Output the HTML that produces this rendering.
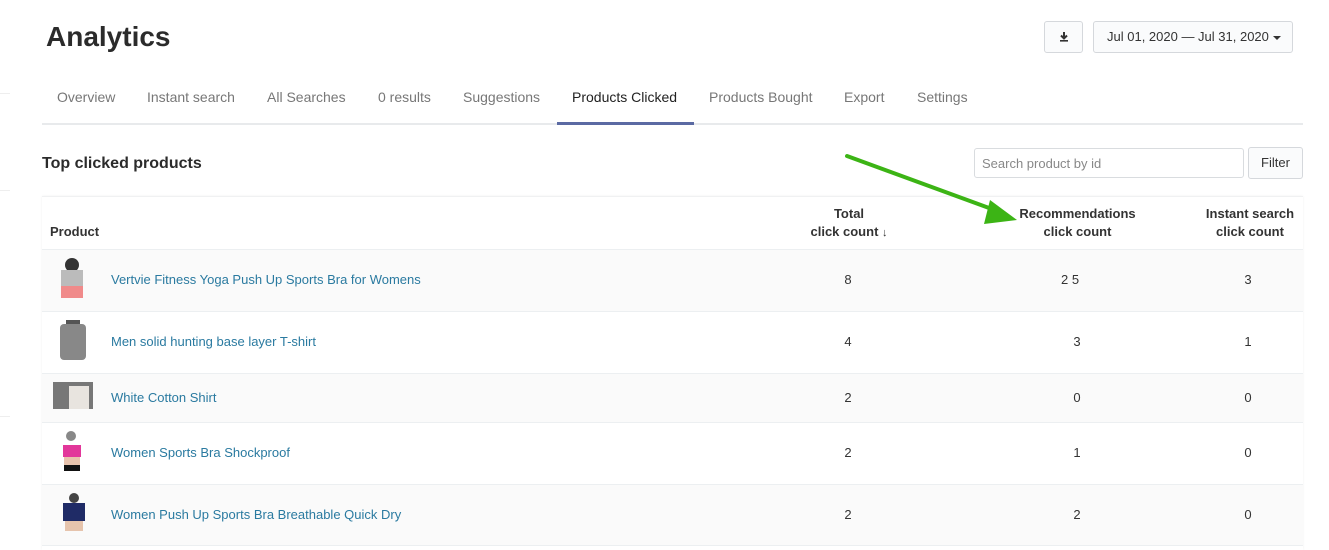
<!DOCTYPE html>
<html><head><meta charset="utf-8"><style>
*{box-sizing:border-box;margin:0;padding:0}
body{width:1329px;height:550px;background:#fff;font-family:"Liberation Sans",sans-serif;position:relative;overflow:hidden;color:#333}
.a{position:absolute}
h1{position:absolute;left:46px;top:21px;font-size:28px;font-weight:bold;color:#2b2b2b}
.btn{position:absolute;border:1px solid #d5d8dc;border-radius:3px;background:#fafbfc;font-size:13px;color:#333}
.tab{position:absolute;top:89px;font-size:14px;color:#777}
.row{position:absolute;left:42px;width:1261px;border-top:1px solid #eceff1}
.lnk{position:absolute;left:111px;font-size:13px;color:#2a7aa0}
.n{position:absolute;font-size:13px;color:#333;width:20px;text-align:center}
.th{position:absolute;font-size:13px;font-weight:bold;color:#333;text-align:center;line-height:18px}
</style></head><body>
<div class="a" style="left:0;top:93px;width:10px;height:1px;background:#eee"></div>
<div class="a" style="left:0;top:190px;width:10px;height:1px;background:#eee"></div>
<div class="a" style="left:0;top:416px;width:10px;height:1px;background:#eee"></div>
<h1>Analytics</h1>
<div class="btn" style="left:1044px;top:21px;width:39px;height:32px;text-align:center;line-height:30px;font-size:12px">
<svg width="10" height="11" viewBox="0 0 10 11" style="margin-top:9px"><path d="M5 1v6M2 4.5L5 7.5 8 4.5" stroke="#333" stroke-width="2" fill="none"/><rect x="1" y="9" width="8" height="1.6" fill="#333"/></svg></div>
<div class="btn" style="left:1093px;top:21px;width:200px;height:32px;line-height:30px;padding-left:13px">Jul 01, 2020 — Jul 31, 2020 <span style="display:inline-block;border-left:4px solid transparent;border-right:4px solid transparent;border-top:4px solid #333;vertical-align:middle"></span></div>
<div class="tab" style="left:57px">Overview</div>
<div class="tab" style="left:147px">Instant search</div>
<div class="tab" style="left:267px">All Searches</div>
<div class="tab" style="left:378px">0 results</div>
<div class="tab" style="left:463px">Suggestions</div>
<div class="tab" style="left:572px;color:#222">Products Clicked</div>
<div class="tab" style="left:709px">Products Bought</div>
<div class="tab" style="left:844px">Export</div>
<div class="tab" style="left:917px">Settings</div>
<div class="a" style="left:42px;top:123px;width:1261px;height:2px;background:#e8eaec"></div>
<div class="a" style="left:557px;top:122px;width:137px;height:3px;background:#5b6aa3"></div>
<div class="a" style="left:42px;top:155px;font-size:16px;font-weight:bold;color:#2b2b2b">Top clicked products</div>
<div class="a" style="left:974px;top:148px;width:270px;height:30px;border:1px solid #d9dcdf;border-radius:3px;font-size:13px;color:#888;padding:7px 0 0 7px">Search product by id</div>
<div class="btn" style="left:1248px;top:147px;width:55px;height:32px;text-align:center;line-height:30px">Filter</div>
<div class="a" style="left:42px;top:196px;width:1261px;height:354px;border-top:1px solid #f0f1f2;box-shadow:0 0 2px rgba(0,0,0,.06)"></div>
<div class="th" style="left:50px;top:223px;text-align:left">Product</div>
<div class="th" style="left:789px;top:205px;width:120px">Total<br>click count <span style="font-weight:normal;font-size:11px">↓</span></div>
<div class="th" style="left:1010px;top:205px;width:135px">Recommendations<br>click count</div>
<div class="th" style="left:1195px;top:205px;width:110px">Instant search<br>click count</div>
<div class="row" style="top:249px;height:62px;background:#fafafa"></div>
<div class="row" style="top:311px;height:62px;background:#fff"></div>
<div class="row" style="top:373px;height:49px;background:#fafafa"></div>
<div class="row" style="top:422px;height:62px;background:#fff"></div>
<div class="row" style="top:484px;height:62px;background:#fafafa;border-bottom:1px solid #eceff1"></div>
<div class="a" style="left:55px;top:258px;width:34px;height:40px">
<div class="a" style="left:10px;top:0;width:14px;height:14px;border-radius:50%;background:#333"></div>
<div class="a" style="left:6px;top:12px;width:22px;height:17px;background:#bbb"></div>
<div class="a" style="left:6px;top:28px;width:22px;height:12px;background:#f08a8a"></div></div>
<div class="a" style="left:58px;top:320px;width:30px;height:40px">
<div class="a" style="left:8px;top:0;width:14px;height:6px;background:#555"></div>
<div class="a" style="left:2px;top:4px;width:26px;height:36px;background:#888;border-radius:4px"></div></div>
<div class="a" style="left:53px;top:382px;width:40px;height:27px;background:#777">
<div class="a" style="left:16px;top:4px;width:20px;height:23px;background:#e8e4df"></div></div>
<div class="a" style="left:60px;top:431px;width:24px;height:40px">
<div class="a" style="left:6px;top:0;width:10px;height:10px;border-radius:50%;background:#888"></div>
<div class="a" style="left:3px;top:14px;width:18px;height:12px;background:#e2379a"></div>
<div class="a" style="left:4px;top:26px;width:16px;height:8px;background:#e8c3ad"></div>
<div class="a" style="left:4px;top:34px;width:16px;height:6px;background:#111"></div></div>
<div class="a" style="left:55px;top:493px;width:38px;height:40px">
<div class="a" style="left:14px;top:0;width:10px;height:10px;border-radius:50%;background:#444"></div>
<div class="a" style="left:8px;top:10px;width:22px;height:18px;background:#1f2b66"></div>
<div class="a" style="left:10px;top:28px;width:18px;height:10px;background:#e6c4ad"></div></div>
<div class="lnk" style="top:272px">Vertvie Fitness Yoga Push Up Sports Bra for Womens</div>
<div class="lnk" style="top:334px">Men solid hunting base layer T-shirt</div>
<div class="lnk" style="top:390px">White Cotton Shirt</div>
<div class="lnk" style="top:445px">Women Sports Bra Shockproof</div>
<div class="lnk" style="top:507px">Women Push Up Sports Bra Breathable Quick Dry</div>
<div class="n" style="left:838px;top:272px">8</div><div class="n" style="left:1061px;top:272px;width:24px;text-align:left">2&nbsp;5</div><div class="n" style="left:1238px;top:272px">3</div>
<div class="n" style="left:838px;top:334px">4</div><div class="n" style="left:1067px;top:334px">3</div><div class="n" style="left:1238px;top:334px">1</div>
<div class="n" style="left:838px;top:390px">2</div><div class="n" style="left:1067px;top:390px">0</div><div class="n" style="left:1238px;top:390px">0</div>
<div class="n" style="left:838px;top:445px">2</div><div class="n" style="left:1067px;top:445px">1</div><div class="n" style="left:1238px;top:445px">0</div>
<div class="n" style="left:838px;top:507px">2</div><div class="n" style="left:1067px;top:507px">2</div><div class="n" style="left:1238px;top:507px">0</div>
<svg class="a" style="left:840px;top:150px" width="180" height="75" viewBox="0 0 180 75">
<path d="M7 6 L160 62" stroke="#3cb415" stroke-width="4" stroke-linecap="round" fill="none"/>
<path d="M150 50 L177 70 L144 74 Z" fill="#3cb415"/></svg>
</body></html>
